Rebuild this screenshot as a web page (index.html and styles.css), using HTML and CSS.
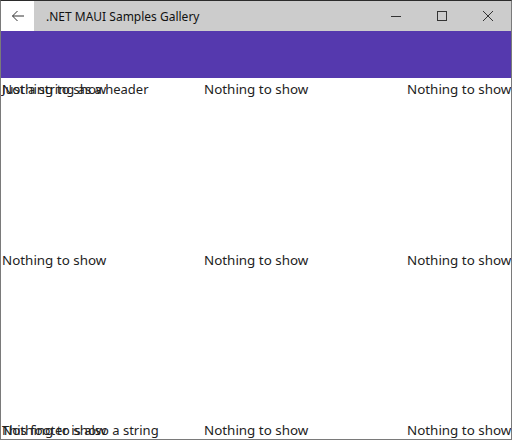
FILE: index.html
```html
<!DOCTYPE html>
<html>
<head>
<meta charset="utf-8">
<link rel="stylesheet" href="styles.css">
</head>
<body>
<div class="window">
  <div class="titlebar">
    <div class="back">
      <svg width="14" height="12" viewBox="0 0 14 12"><path d="M13 6H1.5M6.5 1L1.5 6L6.5 11" fill="none" stroke="#333" stroke-width="1"/></svg>
    </div>
    <div class="title">.NET MAUI Samples Gallery</div>
    <div class="controls">
      <div class="ctl"><svg width="10" height="10" viewBox="0 0 10 10"><path d="M0 5.5H10" stroke="#333" stroke-width="1"/></svg></div>
      <div class="ctl"><svg width="10" height="10" viewBox="0 0 10 10"><rect x="0.5" y="0.5" width="9" height="9" fill="none" stroke="#333" stroke-width="1"/></svg></div>
      <div class="ctl"><svg width="10" height="10" viewBox="0 0 10 10"><path d="M0 0L10 10M10 0L0 10" stroke="#333" stroke-width="1"/></svg></div>
    </div>
  </div>
  <div class="navbar"></div>
  <div class="content">
    <div class="grid">
      <div class="cell">Nothing to show</div>
      <div class="cell">Nothing to show</div>
      <div class="cell">Nothing to show</div>
      <div class="cell">Nothing to show</div>
      <div class="cell">Nothing to show</div>
      <div class="cell">Nothing to show</div>
      <div class="cell">Nothing to show</div>
      <div class="cell">Nothing to show</div>
      <div class="cell">Nothing to show</div>
    </div>
    <div class="header">Just a string as a header</div>
    <div class="footer">This footer is also a string</div>
  </div>
</div>
</body>
</html>
```
FILE: styles.css
```css
html, body {
  margin: 0;
  padding: 0;
  background: #fff;
}
.window {
  width: 512px;
  height: 440px;
  box-sizing: border-box;
  border: 1px solid #7a7a7a;
  border-top-color: #2b2b2b;
  display: flex;
  flex-direction: column;
  overflow: hidden;
  font-family: "Noto Sans", "Open Sans", sans-serif;
}
.titlebar {
  height: 30px;
  flex: none;
  background: #cccccc;
  display: flex;
  align-items: center;
}
.back {
  width: 33px;
  height: 30px;
  background: #fff;
  display: flex;
  align-items: center;
  justify-content: center;
}
.title {
  margin-left: 12px;
  font-size: 12px;
  color: #111;
  flex: 1;
}
.controls {
  display: flex;
  height: 30px;
}
.ctl {
  width: 46px;
  height: 30px;
  display: flex;
  align-items: center;
  justify-content: center;
}
.navbar {
  height: 47px;
  flex: none;
  background: #5539ae;
}
.content {
  position: relative;
  flex: 1;
  overflow: hidden;
}
.grid {
  display: grid;
  grid-template-columns: 202px 203px 200px;
  grid-auto-rows: 170.5px;
  padding-left: 1px;
  padding-top: 1px;
}
.cell, .header, .footer {
  font-size: 13.4px;
  line-height: 20px;
  color: #222;
  white-space: nowrap;
}
.header, .footer {
  font-size: 13px;
}
.header {
  position: absolute;
  left: 1px;
  top: 1px;
}
.footer {
  position: absolute;
  left: 1px;
  bottom: -1px;
}
```
